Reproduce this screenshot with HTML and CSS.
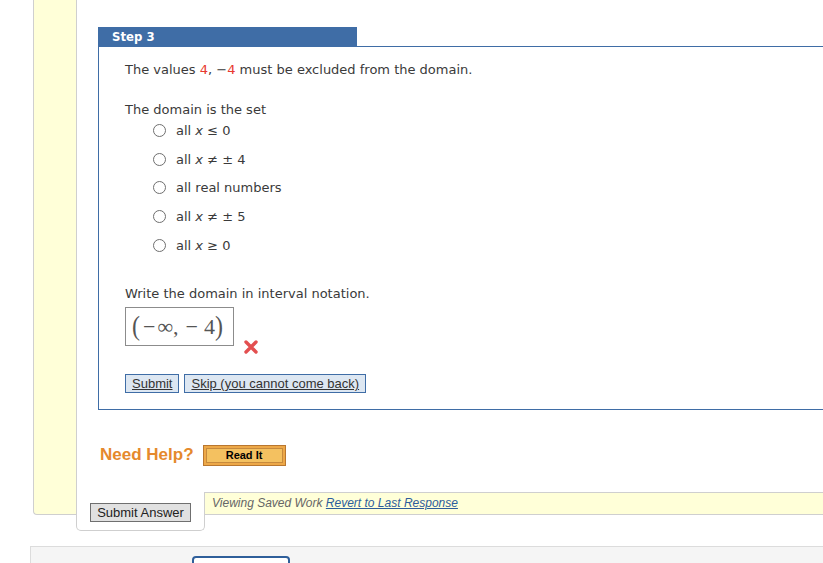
FILE: index.html
```html
<!DOCTYPE html>
<html lang="en">
  <head>
    <meta charset="UTF-8" />
    <title>Step 3</title>
    <link rel="stylesheet" href="styles.css">
  </head>
  <body>
    <div class="question">
      <div class="panel">
        <div class="step">
          <div class="step-head">Step 3</div>
          <div class="step-body">
            <p class="line first">The values <span class="red">4</span>, &minus;<span class="red">4</span> must be excluded from the domain.</p>
            <p class="line set">The domain is the set</p>
            <div class="choices">
              <label class="choice"><span class="radio"></span><span>all <i>x</i> &le; 0</span></label>
              <label class="choice"><span class="radio"></span><span>all <i>x</i> &ne; &plusmn; 4</span></label>
              <label class="choice"><span class="radio"></span><span>all real numbers</span></label>
              <label class="choice"><span class="radio"></span><span>all <i>x</i> &ne; &plusmn; 5</span></label>
              <label class="choice"><span class="radio"></span><span>all <i>x</i> &ge; 0</span></label>
            </div>
            <p class="line write">Write the domain in interval notation.</p>
            <div class="answer-row">
              <div class="answer"><span class="paren">(</span><span class="op">&minus;</span>&infin;,<span class="op wide">&minus;</span>4<span class="paren">)</span></div>
              <svg class="wrong" width="14" height="14" viewBox="0 0 14 14">
                <path d="M2 2 L12 12 M12 2 L2 12" stroke="#e34f50" stroke-width="3.4" stroke-linecap="round" />
              </svg>
            </div>
            <div class="buttons">
              <button class="btn-step">Submit</button>
              <button class="btn-step">Skip (you cannot come back)</button>
            </div>
          </div>
        </div>
        <div class="help">
          <span class="help-text">Need Help?</span>
          <button class="read-it"><span>Read It</span></button>
        </div>
      </div>
      <div class="footer">
        <div class="tab">
          <button class="btn-submit">Submit Answer</button>
        </div>
        <div class="saved">Viewing Saved Work <a href="#">Revert to Last Response</a></div>
      </div>
    </div>
    <div class="next-bar">
      <div class="next-tab"></div>
    </div>
  </body>
</html>
```

FILE: styles.css
```css
* {
  margin: 0;
  padding: 0;
  box-sizing: border-box;
}
body {
  font-family: "DejaVu Sans", Verdana, sans-serif;
  color: #3a3a3a;
  background: #fff;
  overflow: hidden;
}
.question {
  margin-left: 33px;
  background: #ffffd8;
  border-left: 1px solid #cfcfcf;
  border-bottom: 1px solid #cfcfcf;
  border-bottom-left-radius: 4px;
  height: 515px;
}
.panel {
  margin-left: 42px;
  background: #fff;
  border-left: 1px solid #cfcfcf;
  padding: 27px 0 26px 21px;
}
.step-head {
  width: 259px;
  height: 19px;
  background: #3f6da6;
  color: #fff;
  font-family: "DejaVu Sans Condensed", "DejaVu Sans", sans-serif;
  font-weight: bold;
  font-size: 13px;
  line-height: 19px;
  padding-left: 14px;
}
.step-body {
  border: 1px solid #3f6da6;
  border-right: none;
  padding: 15px 0 16px 26px;
}
.line {
  font-size: 13px;
  line-height: 16px;
}
.red {
  color: #e8392f;
}
.set {
  margin-top: 24px;
}
.choices {
  margin-top: -2px;
  padding-left: 28px;
}
.choice {
  display: flex;
  align-items: center;
  height: 28.75px;
  font-size: 13px;
}
.radio {
  width: 13px;
  height: 13px;
  border: 1px solid #6f6f6f;
  border-radius: 50%;
  margin-right: 10px;
  background: #fff;
}
.write {
  margin-top: 26px;
}
.answer-row {
  display: flex;
  align-items: flex-end;
  margin-top: 5px;
}
.answer {
  width: 109px;
  height: 39px;
  border: 1px solid #8c8c8c;
  font-family: "Liberation Serif", "Times New Roman", serif;
  font-size: 22px;
  color: #555;
  line-height: 37px;
  padding-left: 6px;
  white-space: nowrap;
}
.paren {
  display: inline-block;
  font-size: 24px;
  transform: scaleY(1.15);
}
.op {
  margin: 0 2px 0 3px;
}
.op.wide {
  margin: 0 6px 0 7px;
}
.wrong {
  margin-left: 10px;
  margin-bottom: -8px;
}
.buttons {
  display: flex;
  gap: 5px;
  margin-top: 28px;
}
.btn-step {
  height: 19px;
  padding: 0 6px;
  background: #dde7f2;
  border: 1px solid #3f6da6;
  font-family: "Liberation Sans", Arial, sans-serif;
  font-size: 13px;
  color: #333;
  text-decoration: underline;
}
.help {
  display: flex;
  align-items: center;
  margin-top: 35px;
  padding-left: 2px;
}
.help-text {
  font-family: "Liberation Sans", Arial, sans-serif;
  font-weight: bold;
  font-size: 17px;
  color: #e5892d;
}
.read-it {
  margin-left: 9px;
  width: 83px;
  height: 21px;
  border: 1px solid #b9772f;
  background: #eda848;
  padding: 2px;
}
.read-it span {
  display: block;
  height: 15px;
  border: 1px solid #c78a3d;
  background: #f4c160;
  font-family: "Liberation Sans", Arial, sans-serif;
  font-weight: bold;
  font-size: 11px;
  line-height: 13px;
  color: #000;
}
.footer {
  display: flex;
  margin-left: 42px;
}
.tab {
  width: 129px;
  height: 39px;
  background: #fff;
  border: 1px solid #cfcfcf;
  border-top: none;
  border-radius: 0 0 5px 5px;
  padding: 10px 0 0 13px;
  position: relative;
}
.btn-submit {
  width: 101px;
  height: 19px;
  background: #e1e1e1;
  border: 1px solid #6f6f6f;
  font-family: "Liberation Sans", Arial, sans-serif;
  font-size: 13px;
  color: #222;
}
.saved {
  flex: 1;
  height: 22px;
  border-top: 1px solid #cfcfcf;
  margin-left: -1px;
  padding: 3px 0 0 8px;
  font-family: "Liberation Sans", Arial, sans-serif;
  font-style: italic;
  font-size: 12px;
  color: #666;
}
.saved a {
  color: #2d5d9c;
}
.next-bar {
  margin: 31px 0 0 30px;
  height: 30px;
  background: #f5f5f5;
  border-top: 1px solid #dcdcdc;
  border-left: 1px solid #dcdcdc;
  padding-left: 161px;
  padding-top: 9px;
}
.next-tab {
  width: 98px;
  height: 20px;
  border: 2px solid #2f5f9a;
  border-radius: 4px 4px 0 0;
  background: #fff;
}
```
